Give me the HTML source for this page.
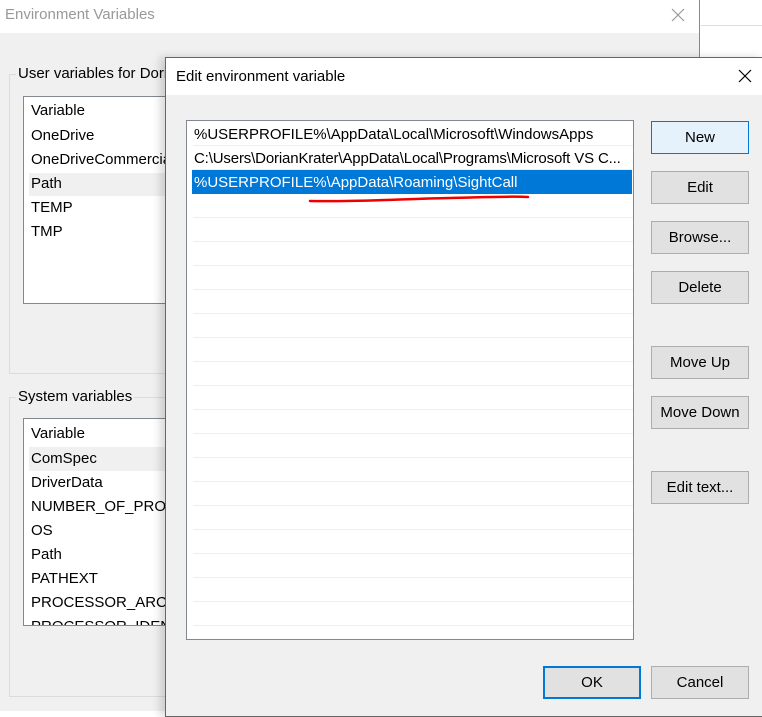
<!DOCTYPE html>
<html><head><meta charset="utf-8"><style>
*{margin:0;padding:0;box-sizing:border-box}
body{width:762px;height:711px;overflow:hidden;background:#fff;font-family:"Liberation Sans",sans-serif;font-size:15px;color:#000;position:relative}
.a{position:absolute}
.t{position:absolute;white-space:nowrap;line-height:16px}
.btn{position:absolute;width:98px;height:33px;background:#e1e1e1;border:1px solid #adadad;text-align:center;line-height:31px;font-size:15px}
.row{position:absolute;left:6px;width:440px;height:24px;border-bottom:1px solid #eeeeee}
</style></head><body>
<div class="a" style="left:0;top:0;width:700px;height:711px;background:#f0f0f0;border-right:1px solid #888"></div>
<div class="a" style="left:0;top:0;width:699px;height:33px;background:#fff"></div>
<div class="t" style="left:5px;top:7px;color:#999;font-size:15px">Environment Variables</div>
<svg class="a" style="left:671px;top:8px" width="14" height="14"><path d="M1 1L13 13M13 1L1 13" stroke="#999" stroke-width="1.2"/></svg>
<div class="a" style="left:701px;top:0;width:61px;height:57px;background:#fff"></div>
<div class="a" style="left:701px;top:25px;width:61px;height:1px;background:#ddd"></div>
<div class="a" style="left:9px;top:74px;width:200px;height:300px;border:1px solid #dcdcdc"></div>
<div class="t" style="left:16px;top:66px;background:#f0f0f0;padding:0 2px">User variables for Dori</div>
<div class="a" style="left:23px;top:96px;width:160px;height:208px;background:#fff;border:1px solid #828790"></div>
<div class="a" style="left:29px;top:173px;width:140px;height:23px;background:#f0f0f0"></div>
<div class="t" style="left:31px;top:103px">Variable</div>
<div class="t" style="left:31px;top:128px">OneDrive</div>
<div class="t" style="left:31px;top:152px">OneDriveCommercial</div>
<div class="t" style="left:31px;top:176px">Path</div>
<div class="t" style="left:31px;top:200px">TEMP</div>
<div class="t" style="left:31px;top:224px">TMP</div>
<div class="a" style="left:9px;top:397px;width:200px;height:300px;border:1px solid #dcdcdc"></div>
<div class="t" style="left:16px;top:389px;background:#f0f0f0;padding:0 2px">System variables</div>
<div class="a" style="left:23px;top:418px;width:160px;height:208px;background:#fff;border:1px solid #828790;overflow:hidden">
<div class="a" style="left:5px;top:28px;width:140px;height:24px;background:#f0f0f0"></div>
<div class="t" style="left:7px;top:7px">Variable</div>
<div class="t" style="left:7px;top:32px">ComSpec</div>
<div class="t" style="left:7px;top:56px">DriverData</div>
<div class="t" style="left:7px;top:80px">NUMBER_OF_PROCESSORS</div>
<div class="t" style="left:7px;top:104px">OS</div>
<div class="t" style="left:7px;top:128px">Path</div>
<div class="t" style="left:7px;top:152px">PATHEXT</div>
<div class="t" style="left:7px;top:176px">PROCESSOR_ARCHITECTURE</div>
<div class="t" style="left:7px;top:200px">PROCESSOR_IDENTIFIER</div>
</div>
<div class="a" style="left:165px;top:57px;width:600px;height:660px;background:#f0f0f0;border:1px solid #666;box-shadow:-5px 0 8px rgba(0,0,0,0.15)"></div>
<div class="a" style="left:166px;top:58px;width:596px;height:37px;background:#fff"></div>
<div class="t" style="left:176px;top:69px">Edit environment variable</div>
<svg class="a" style="left:738px;top:69px" width="14" height="14"><path d="M1 1L13 13M13 1L1 13" stroke="#000" stroke-width="1.2"/></svg>
<div class="a" style="left:186px;top:120px;width:448px;height:520px;background:#fff;border:1px solid #828790;overflow:hidden">
<div class="row" style="top:1px"></div>
<div class="row" style="top:25px"></div>
<div class="a" style="left:5px;top:49px;width:440px;height:24px;background:#0078d7"></div>
<div class="row" style="top:73px"></div><div class="row" style="top:97px"></div><div class="row" style="top:121px"></div><div class="row" style="top:145px"></div><div class="row" style="top:169px"></div><div class="row" style="top:193px"></div><div class="row" style="top:217px"></div><div class="row" style="top:241px"></div><div class="row" style="top:265px"></div><div class="row" style="top:289px"></div><div class="row" style="top:313px"></div><div class="row" style="top:337px"></div><div class="row" style="top:361px"></div><div class="row" style="top:385px"></div><div class="row" style="top:409px"></div><div class="row" style="top:433px"></div><div class="row" style="top:457px"></div><div class="row" style="top:481px"></div>
<div class="t" style="left:7px;top:6px">%USERPROFILE%\AppData\Local\Microsoft\WindowsApps</div>
<div class="t" style="left:7px;top:30px;letter-spacing:-0.15px">C:\Users\DorianKrater\AppData\Local\Programs\Microsoft VS C...</div>
<div class="t" style="left:7px;top:54px;color:#fff">%USERPROFILE%\AppData\Roaming\SightCall</div>
</div>
<svg class="a" style="left:0;top:0" width="762" height="711"><path d="M310 201 C360 202 400 199 450 198 C490 197 510 196 528 197" stroke="#e00" stroke-width="2.5" fill="none" stroke-linecap="round"/></svg>
<div class="btn" style="left:651px;top:121px;background:#e5f1fb;border-color:#0078d7">New</div>
<div class="btn" style="left:651px;top:171px">Edit</div>
<div class="btn" style="left:651px;top:221px">Browse...</div>
<div class="btn" style="left:651px;top:271px">Delete</div>
<div class="btn" style="left:651px;top:346px">Move Up</div>
<div class="btn" style="left:651px;top:396px">Move Down</div>
<div class="btn" style="left:651px;top:471px">Edit text...</div>
<div class="btn" style="left:543px;top:666px;border:2px solid #0078d7;line-height:29px">OK</div>
<div class="btn" style="left:651px;top:666px">Cancel</div>
</body></html>
